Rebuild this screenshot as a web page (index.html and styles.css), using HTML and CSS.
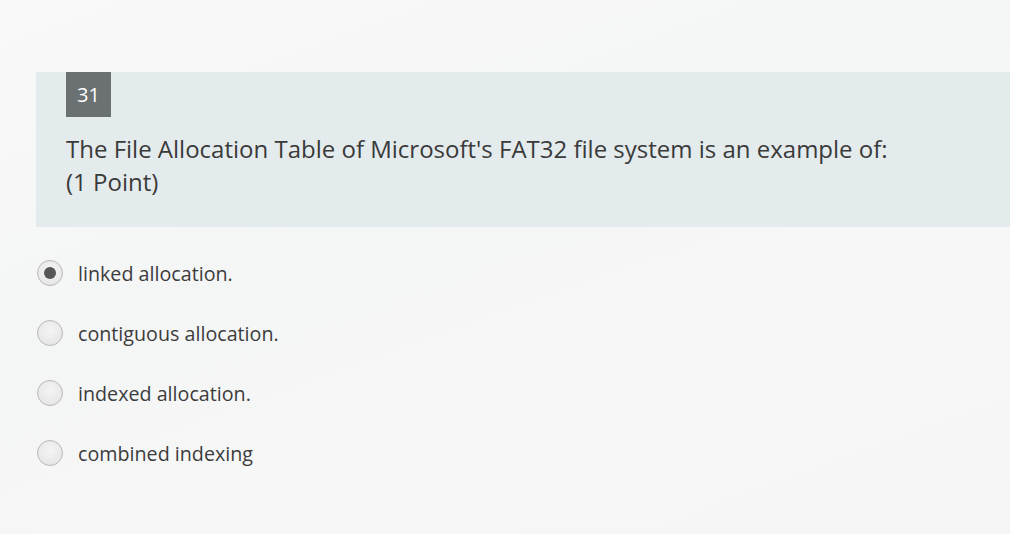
FILE: index.html
```html
<!DOCTYPE html>
<html>
<head>
<meta charset="utf-8">
<link rel="stylesheet" href="styles.css">
</head>
<body>
<main class="page">
  <section class="question">
    <div class="badge">31</div>
    <div class="qtext">The File Allocation Table of Microsoft's FAT32 file system is an example of:<br>(1 Point)</div>
  </section>
  <ul class="options">
    <li class="option"><span class="radio checked"></span><span class="label">linked allocation.</span></li>
    <li class="option"><span class="radio"></span><span class="label">contiguous allocation.</span></li>
    <li class="option"><span class="radio"></span><span class="label">indexed allocation.</span></li>
    <li class="option"><span class="radio"></span><span class="label">combined indexing</span></li>
  </ul>
</main>
</body>
</html>
```

FILE: styles.css
```css
html, body {
  margin: 0;
  padding: 0;
}
body {
  width: 1010px;
  height: 534px;
  overflow: hidden;
  background: linear-gradient(160deg, #f9f9f9 0%, #f4f5f5 40%, #f7f7f7 70%, #f5f5f5 100%);
  font-family: "Open Sans", "Noto Sans", sans-serif;
}
.page {
  padding-top: 72px;
  padding-left: 36px;
}
.question {
  background: #e4ebed;
  height: 155px;
  box-sizing: border-box;
  padding-left: 30px;
}
.badge {
  width: 45px;
  height: 45px;
  background: #6b7172;
  color: #ffffff;
  font-size: 20px;
  line-height: 45px;
  text-align: center;
}
.qtext {
  margin-top: 15px;
  color: #3a3a3a;
  font-size: 24px;
  line-height: 33px;
}
.options {
  list-style: none;
  margin: 16px 0 0 0;
  padding: 0;
}
.option {
  display: flex;
  align-items: center;
  height: 60px;
  margin-left: 1px;
}
.radio {
  width: 24px;
  height: 24px;
  border-radius: 50%;
  border: 1px solid #b9b9b9;
  background: radial-gradient(circle at 50% 40%, #f4f4f4 0%, #e2e2e2 100%);
  position: relative;
  flex: none;
}
.radio.checked::after {
  content: "";
  position: absolute;
  left: 6px;
  top: 6px;
  width: 12px;
  height: 12px;
  border-radius: 50%;
  background: #555;
}
.label {
  margin-left: 15px;
  color: #3c3c3c;
  font-size: 19.7px;
}
```
